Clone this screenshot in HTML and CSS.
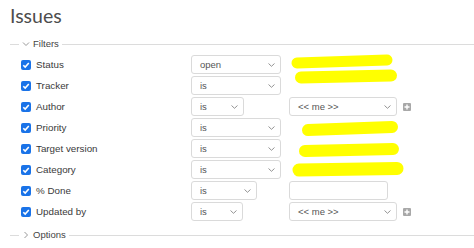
FILE: index.html
```html
<!DOCTYPE html>
<html>
<head>
<meta charset="utf-8">
<link rel="stylesheet" href="styles.css">
</head>
<body>
<div class="page">
  <h2 class="title">Issues</h2>

  <div class="legend">
    <span class="rule short"></span>
    <svg class="chev" width="8" height="6" viewBox="0 0 8 6"><path d="M1 1.5 L4 4.5 L7 1.5" fill="none" stroke="#999" stroke-width="1"/></svg>
    <span class="legend-text">Filters</span>
    <span class="rule long"></span>
  </div>

  <div class="rows">
    <div class="row">
      <div class="field"><span class="check"><svg width="10" height="10" viewBox="0 0 10 10"><path d="M2.3 5.2 L4.2 7.1 L7.8 3" fill="none" stroke="#fff" stroke-width="1.6"/></svg></span><span class="label">Status</span></div>
      <div class="op"><div class="select w90"><span>open</span><svg class="dd" width="7" height="4" viewBox="0 0 7 4"><path d="M0.5 0.5 L3.5 3.3 L6.5 0.5" fill="none" stroke="#888" stroke-width="0.9"/></svg></div></div>
      <div class="val"></div>
    </div>
    <div class="row">
      <div class="field"><span class="check"><svg width="10" height="10" viewBox="0 0 10 10"><path d="M2.3 5.2 L4.2 7.1 L7.8 3" fill="none" stroke="#fff" stroke-width="1.6"/></svg></span><span class="label">Tracker</span></div>
      <div class="op"><div class="select w90"><span>is</span><svg class="dd" width="7" height="4" viewBox="0 0 7 4"><path d="M0.5 0.5 L3.5 3.3 L6.5 0.5" fill="none" stroke="#888" stroke-width="0.9"/></svg></div></div>
      <div class="val"></div>
    </div>
    <div class="row">
      <div class="field"><span class="check"><svg width="10" height="10" viewBox="0 0 10 10"><path d="M2.3 5.2 L4.2 7.1 L7.8 3" fill="none" stroke="#fff" stroke-width="1.6"/></svg></span><span class="label">Author</span></div>
      <div class="op"><div class="select w53"><span>is</span><svg class="dd" width="7" height="4" viewBox="0 0 7 4"><path d="M0.5 0.5 L3.5 3.3 L6.5 0.5" fill="none" stroke="#888" stroke-width="0.9"/></svg></div></div>
      <div class="val"><div class="select w108"><span>&lt;&lt; me &gt;&gt;</span><svg class="dd" width="7" height="4" viewBox="0 0 7 4"><path d="M0.5 0.5 L3.5 3.3 L6.5 0.5" fill="none" stroke="#888" stroke-width="0.9"/></svg></div><span class="plus"><svg width="8" height="8" viewBox="0 0 8 8"><path d="M4 1.5 V6.5 M1.5 4 H6.5" stroke="#fff" stroke-width="1.4"/></svg></span></div>
    </div>
    <div class="row">
      <div class="field"><span class="check"><svg width="10" height="10" viewBox="0 0 10 10"><path d="M2.3 5.2 L4.2 7.1 L7.8 3" fill="none" stroke="#fff" stroke-width="1.6"/></svg></span><span class="label">Priority</span></div>
      <div class="op"><div class="select w90"><span>is</span><svg class="dd" width="7" height="4" viewBox="0 0 7 4"><path d="M0.5 0.5 L3.5 3.3 L6.5 0.5" fill="none" stroke="#888" stroke-width="0.9"/></svg></div></div>
      <div class="val"></div>
    </div>
    <div class="row">
      <div class="field"><span class="check"><svg width="10" height="10" viewBox="0 0 10 10"><path d="M2.3 5.2 L4.2 7.1 L7.8 3" fill="none" stroke="#fff" stroke-width="1.6"/></svg></span><span class="label">Target version</span></div>
      <div class="op"><div class="select w90"><span>is</span><svg class="dd" width="7" height="4" viewBox="0 0 7 4"><path d="M0.5 0.5 L3.5 3.3 L6.5 0.5" fill="none" stroke="#888" stroke-width="0.9"/></svg></div></div>
      <div class="val"></div>
    </div>
    <div class="row">
      <div class="field"><span class="check"><svg width="10" height="10" viewBox="0 0 10 10"><path d="M2.3 5.2 L4.2 7.1 L7.8 3" fill="none" stroke="#fff" stroke-width="1.6"/></svg></span><span class="label">Category</span></div>
      <div class="op"><div class="select w90"><span>is</span><svg class="dd" width="7" height="4" viewBox="0 0 7 4"><path d="M0.5 0.5 L3.5 3.3 L6.5 0.5" fill="none" stroke="#888" stroke-width="0.9"/></svg></div></div>
      <div class="val"></div>
    </div>
    <div class="row">
      <div class="field"><span class="check"><svg width="10" height="10" viewBox="0 0 10 10"><path d="M2.3 5.2 L4.2 7.1 L7.8 3" fill="none" stroke="#fff" stroke-width="1.6"/></svg></span><span class="label">% Done</span></div>
      <div class="op"><div class="select w66"><span>is</span><svg class="dd" width="7" height="4" viewBox="0 0 7 4"><path d="M0.5 0.5 L3.5 3.3 L6.5 0.5" fill="none" stroke="#888" stroke-width="0.9"/></svg></div></div>
      <div class="val"><div class="input w99"></div></div>
    </div>
    <div class="row">
      <div class="field"><span class="check"><svg width="10" height="10" viewBox="0 0 10 10"><path d="M2.3 5.2 L4.2 7.1 L7.8 3" fill="none" stroke="#fff" stroke-width="1.6"/></svg></span><span class="label">Updated by</span></div>
      <div class="op"><div class="select w52"><span>is</span><svg class="dd" width="7" height="4" viewBox="0 0 7 4"><path d="M0.5 0.5 L3.5 3.3 L6.5 0.5" fill="none" stroke="#888" stroke-width="0.9"/></svg></div></div>
      <div class="val"><div class="select w108"><span>&lt;&lt; me &gt;&gt;</span><svg class="dd" width="7" height="4" viewBox="0 0 7 4"><path d="M0.5 0.5 L3.5 3.3 L6.5 0.5" fill="none" stroke="#888" stroke-width="0.9"/></svg></div><span class="plus"><svg width="8" height="8" viewBox="0 0 8 8"><path d="M4 1.5 V6.5 M1.5 4 H6.5" stroke="#fff" stroke-width="1.4"/></svg></span></div>
    </div>
  </div>

  <div class="legend options">
    <span class="rule short"></span>
    <svg class="chev" width="8" height="8" viewBox="0 0 8 8"><path d="M2.5 1 L5.5 4 L2.5 7" fill="none" stroke="#999" stroke-width="1"/></svg>
    <span class="legend-text">Options</span>
    <span class="rule long"></span>
  </div>

  <svg class="marks" width="474" height="248" viewBox="0 0 474 248">
    <g fill="none" stroke="#ffff00" stroke-linecap="round">
      <path d="M297 63 L387 60" stroke-width="11"/>
      <path d="M301 77.5 L391 75.5" stroke-width="12"/>
      <path d="M308 130 L392 127" stroke-width="12"/>
      <path d="M305 151 L393 149" stroke-width="12"/>
      <path d="M299 170 L397 168.5" stroke-width="13"/>
    </g>
  </svg>
</div>
</body>
</html>
```

FILE: styles.css
```css
html, body {
  margin: 0;
  padding: 0;
  background: #fff;
}

.page {
  position: relative;
  width: 474px;
  height: 248px;
  overflow: hidden;
  font-family: "Liberation Sans", Arial, sans-serif;
  color: #333;
}

.title {
  margin: 0;
  padding: 3px 0 0 10px;
  font-family: Lato, "Liberation Sans", sans-serif;
  font-weight: 400;
  font-size: 19.5px;
  line-height: 26px;
  color: #4d4d4d;
}

.legend {
  display: flex;
  align-items: center;
  height: 12px;
  margin-top: 9px;
  padding-left: 10px;
}

.legend .rule {
  height: 1px;
  background: #dcdcdc;
}

.legend .rule.short {
  width: 9px;
}

.legend .rule.long {
  flex: 1;
  margin-left: 3px;
}

.legend .chev {
  margin: 0 3px 0 3px;
}

.legend-text {
  font-size: 9.5px;
  color: #444;
  line-height: 12px;
}

.options {
  margin-top: 6px;
}

.rows {
  margin-top: 5px;
}

.row {
  display: grid;
  grid-template-columns: 170px 98px auto;
  align-items: start;
  height: 21px;
  padding-left: 21px;
}

.field {
  display: flex;
  align-items: center;
  height: 19px;
  gap: 5px;
}

.check {
  display: inline-flex;
  width: 10px;
  height: 10px;
  border-radius: 2px;
  background: #1a73e8;
}

.label {
  font-size: 9.8px;
  color: #3a3a3a;
}

.select, .input {
  box-sizing: border-box;
  height: 19px;
  border: 1px solid #dadada;
  border-radius: 3px;
  background: #fff;
}

.select {
  display: flex;
  align-items: center;
  justify-content: space-between;
  padding: 0 5px 0 8px;
  font-size: 9.5px;
  color: #555;
}

.select .dd {
  flex: none;
}

.val {
  display: flex;
  align-items: center;
  height: 19px;
  gap: 6px;
}

.w90 { width: 90px; }
.w53 { width: 53px; }
.w52 { width: 52px; }
.w66 { width: 66px; }
.w108 { width: 108px; }
.w99 { width: 99px; }

.plus {
  display: inline-flex;
  width: 8px;
  height: 8px;
  background: #a8a8a8;
  border-radius: 1px;
}

.marks {
  position: absolute;
  left: 0;
  top: 0;
  pointer-events: none;
}
```
